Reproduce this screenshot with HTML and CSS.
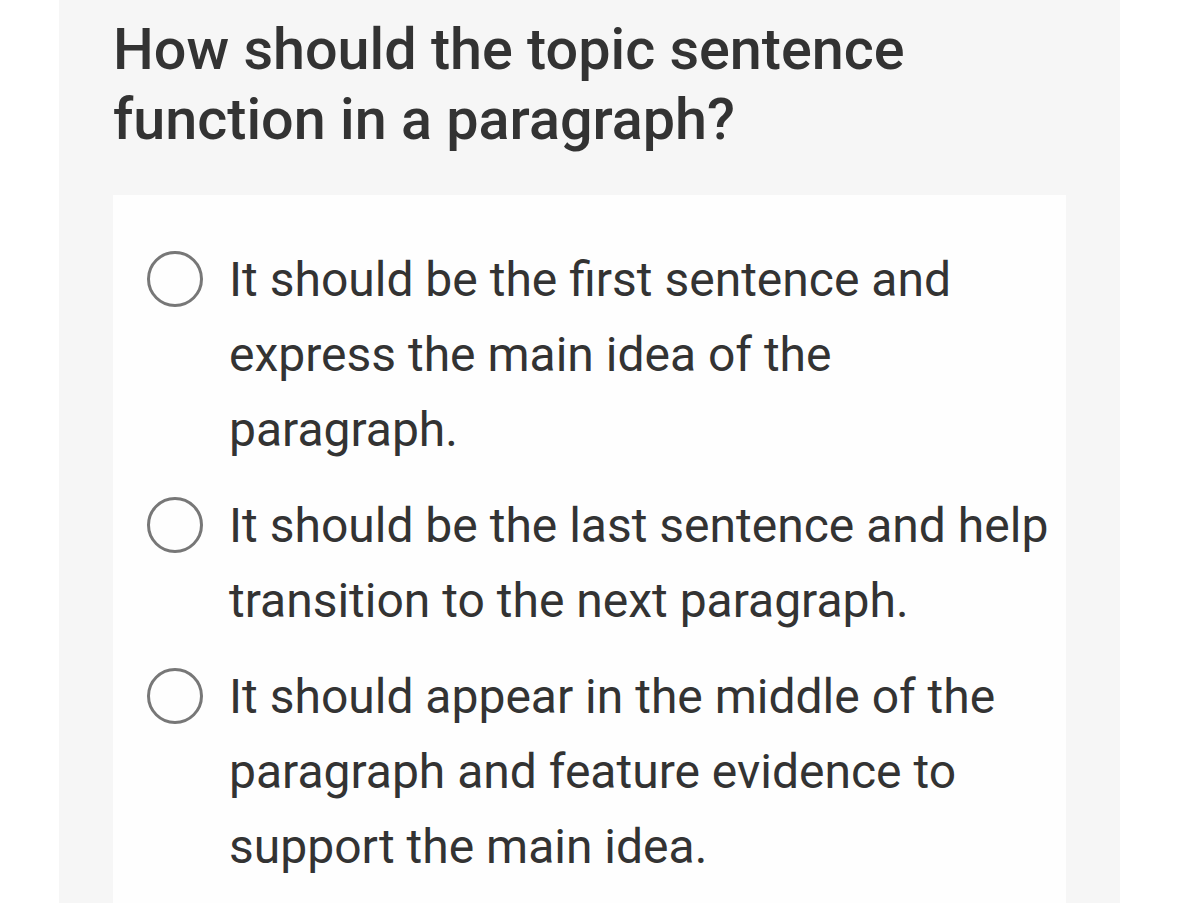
FILE: index.html
```html
<!DOCTYPE html>
<html lang="en">
<head>
<meta charset="utf-8">
<title>Question</title>
<link rel="stylesheet" href="styles.css">
</head>
<body>
<main class="panel">
  <h1 class="question">How should the topic sentence function in a paragraph?</h1>
  <div class="card">
    <label class="option">
      <span class="radio"></span>
      <span class="label-text">It should be the first sentence and express the main idea of the paragraph.</span>
    </label>
    <label class="option">
      <span class="radio"></span>
      <span class="label-text">It should be the last sentence and help transition to the next paragraph.</span>
    </label>
    <label class="option">
      <span class="radio"></span>
      <span class="label-text">It should appear in the middle of the paragraph and feature evidence to support the main idea.</span>
    </label>
  </div>
</main>
</body>
</html>
```

FILE: styles.css
```css
html, body {
  margin: 0;
  padding: 0;
  background: #ffffff;
}

body {
  font-family: Roboto, "Liberation Sans", sans-serif;
  color: #333333;
}

.panel {
  width: 1061px;
  margin: 0 auto;
  box-sizing: border-box;
  background: #f6f6f6;
  padding: 15px 54px 0 54px;
  min-height: 903px;
}

.question {
  margin: 0;
  font-size: 57.5px;
  line-height: 70px;
  font-weight: 500;
  color: #333333;
}

.card {
  margin-top: 40px;
  background: #fefefe;
  padding: 47px 14px 20px 34px;
  display: flex;
  flex-direction: column;
  gap: 21px;
}

.option {
  display: flex;
  align-items: flex-start;
  gap: 26px;
}

.radio {
  flex: none;
  width: 56px;
  height: 56px;
  box-sizing: border-box;
  border: 3px solid #777777;
  border-radius: 50%;
  margin-top: 9px;
}

.label-text {
  font-size: 48px;
  line-height: 75px;
  color: #333333;
}
```
